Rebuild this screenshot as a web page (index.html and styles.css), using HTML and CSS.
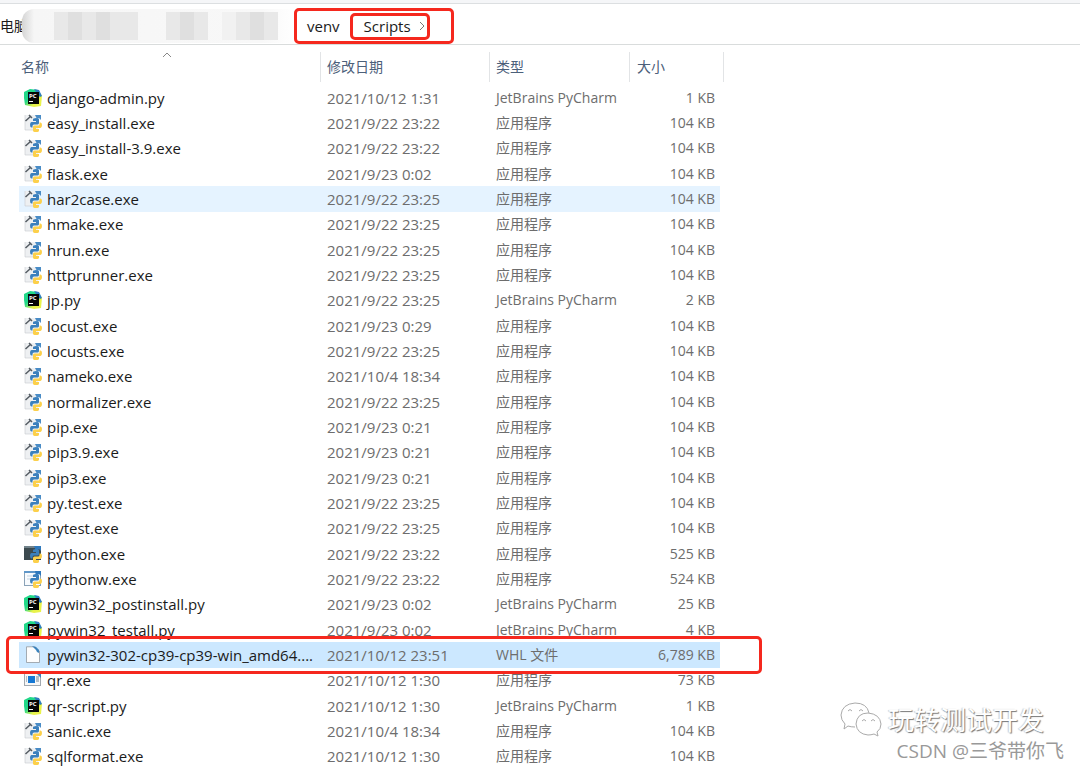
FILE: index.html
```
<!DOCTYPE html>
<html lang="zh-CN">
<head>
  <meta charset="utf-8">
  <title>Scripts</title>
  <link rel="stylesheet" href="styles.css">
</head>
<body>
  <svg class="sprite" aria-hidden="true">
    <defs>
      <linearGradient id="jb" x1="0" y1="0" x2="1" y2="1">
        <stop offset="0.4" stop-color="#21d789"/>
        <stop offset="0.7" stop-color="#e9f24a"/>
      </linearGradient>
    </defs>
    <symbol id="snake" viewBox="0 0 12 14">
      <path fill="#3b80bd" d="M3 1.5Q3 0 6 0T9 1.5V5Q9 6.500 7.500 6.500H4Q2.500 6.500 2.500 8V9.500H1.500Q0 9.500 0 6.800T1.500 4H6V3H3Z"/>
      <path fill="#fcd04b" d="M9.500 4.500H10.500Q12 4.500 12 7T10.500 10H6V11H9V12.500Q9 14 6 14T3 12.500V9Q3 7.500 4.500 7.500H8Q9.500 7.500 9.500 6Z"/>
    </symbol>
    <symbol id="exe" viewBox="0 0 18 18">
      <path fill="#eef0f2" d="M1 1H14V16H1Z"/>
      <path fill="none" stroke="#c6cacf" stroke-width=".6" d="M1 1V16H12"/>
      <path fill="none" stroke="#555c63" stroke-width="1.500" d="M1.500 7L7 2M5 1L8 4"/>
      <path fill="#4a8cc6" d="M11 1L17 1V6L15 4L13 5Z"/>
      <use href="#snake" x="6" y="4" width="12" height="14"/>
    </symbol>
    <symbol id="py" viewBox="0 0 18 18">
      <path fill="url(#jb)" d="M0 3L6 0L14 1L18 7L17 17L10 18L1 16L0 9Z"/>
      <path fill="#2e7dc0" d="M10 0L15 1L18 7L16 8L12 3Z"/>
      <rect x="4" y="3" width="11" height="12" fill="#060606"/>
      <text x="5" y="9" class="pc">PC</text>
      <rect x="5" y="12" width="4" height="1" fill="#fff"/>
    </symbol>
    <symbol id="console" viewBox="0 0 18 18">
      <rect x="0" y="1" width="17" height="14" fill="#3c4a4f"/>
      <rect x="0" y="1" width="17" height="2" fill="#71828a"/>
      <path fill="#2f79bd" d="M10 1H17V6L15 4L12 6Z"/>
      <use href="#snake" x="6" y="4" width="12" height="14"/>
    </symbol>
    <symbol id="window" viewBox="0 0 18 18">
      <rect x=".5" y="1.500" width="16" height="14" fill="#f8fbfe" stroke="#8ba3b8"/>
      <path stroke="#5f97c9" stroke-width="2" d="M0 2H17"/>
      <path stroke="#c1d3e2" d="M3 6H9M3 9H7"/>
      <path fill="#2f79bd" d="M11 1H17V6L15 4L12 6Z"/>
      <use href="#snake" x="6" y="4" width="12" height="14"/>
    </symbol>
    <symbol id="file" viewBox="0 0 18 18">
      <path fill="#fdfdfd" stroke="#92989e" stroke-width=".8" d="M2.500 .8H11L15.500 5V16.500H2.500Z"/>
      <path fill="#3b83bd" d="M8 0L12 1L15 4V7L13 6L12 4Z"/>
    </symbol>
    <symbol id="app" viewBox="0 0 18 18">
      <rect x=".5" y="2.500" width="16" height="12" fill="#f7f7f7" stroke="#a2a9b0"/>
      <rect x="4" y="5" width="7" height="7" fill="#1577d3"/>
      <path stroke="#718596" d="M2 6H3M2 8H3M2 10H3M12 6H15M12 8H15M12 10H15"/>
      <path fill="#3b83bd" d="M11 1H17V7L14 4Z"/>
    </symbol>
  </svg>

  <nav class="address-bar">
    <a href="#" class="root">电脑</a>
    <div class="mosaic">
      <div class="blocks wide"><i></i><i class="dark"></i><i></i><i class="dark"></i><i></i><i></i></div>
      <div class="blocks"><i></i><i class="dark"></i><i></i></div>
      <div class="blocks"><i class="light"></i><i></i><i class="dark"></i><i></i></div>
    </div>
    <div class="mark path-mark">
      <a href="#">venv</a>
      <div class="mark folder-mark">
        <a href="#">Scripts</a>
        <svg class="chevron" viewBox="0 0 6 10"><path d="M1 1L5 5L1 9"/></svg>
      </div>
    </div>
  </nav>

  <table class="files">
    <thead>
      <tr>
        <th class="name"><button>名称</button><svg class="sort" viewBox="0 0 10 6"><path d="M1 5L5 1L9 5"/></svg></th>
        <th class="date"><button>修改日期</button></th>
        <th class="type"><button>类型</button></th>
        <th class="size"><button>大小</button></th>
      </tr>
    </thead>
    <tbody>
      <tr><td><svg class="icon"><use href="#py"/></svg>django-admin.py</td><td>2021/10/12 1:31</td><td class="type">JetBrains PyCharm</td><td class="size">1 KB</td></tr>
      <tr><td><svg class="icon"><use href="#exe"/></svg>easy_install.exe</td><td>2021/9/22 23:22</td><td class="type">应用程序</td><td class="size">104 KB</td></tr>
      <tr><td><svg class="icon"><use href="#exe"/></svg>easy_install-3.9.exe</td><td>2021/9/22 23:22</td><td class="type">应用程序</td><td class="size">104 KB</td></tr>
      <tr><td><svg class="icon"><use href="#exe"/></svg>flask.exe</td><td>2021/9/23 0:02</td><td class="type">应用程序</td><td class="size">104 KB</td></tr>
      <tr class="hover"><td><svg class="icon"><use href="#exe"/></svg>har2case.exe</td><td>2021/9/22 23:25</td><td class="type">应用程序</td><td class="size">104 KB</td></tr>
      <tr><td><svg class="icon"><use href="#exe"/></svg>hmake.exe</td><td>2021/9/22 23:25</td><td class="type">应用程序</td><td class="size">104 KB</td></tr>
      <tr><td><svg class="icon"><use href="#exe"/></svg>hrun.exe</td><td>2021/9/22 23:25</td><td class="type">应用程序</td><td class="size">104 KB</td></tr>
      <tr><td><svg class="icon"><use href="#exe"/></svg>httprunner.exe</td><td>2021/9/22 23:25</td><td class="type">应用程序</td><td class="size">104 KB</td></tr>
      <tr><td><svg class="icon"><use href="#py"/></svg>jp.py</td><td>2021/9/22 23:25</td><td class="type">JetBrains PyCharm</td><td class="size">2 KB</td></tr>
      <tr><td><svg class="icon"><use href="#exe"/></svg>locust.exe</td><td>2021/9/23 0:29</td><td class="type">应用程序</td><td class="size">104 KB</td></tr>
      <tr><td><svg class="icon"><use href="#exe"/></svg>locusts.exe</td><td>2021/9/22 23:25</td><td class="type">应用程序</td><td class="size">104 KB</td></tr>
      <tr><td><svg class="icon"><use href="#exe"/></svg>nameko.exe</td><td>2021/10/4 18:34</td><td class="type">应用程序</td><td class="size">104 KB</td></tr>
      <tr><td><svg class="icon"><use href="#exe"/></svg>normalizer.exe</td><td>2021/9/22 23:25</td><td class="type">应用程序</td><td class="size">104 KB</td></tr>
      <tr><td><svg class="icon"><use href="#exe"/></svg>pip.exe</td><td>2021/9/23 0:21</td><td class="type">应用程序</td><td class="size">104 KB</td></tr>
      <tr><td><svg class="icon"><use href="#exe"/></svg>pip3.9.exe</td><td>2021/9/23 0:21</td><td class="type">应用程序</td><td class="size">104 KB</td></tr>
      <tr><td><svg class="icon"><use href="#exe"/></svg>pip3.exe</td><td>2021/9/23 0:21</td><td class="type">应用程序</td><td class="size">104 KB</td></tr>
      <tr><td><svg class="icon"><use href="#exe"/></svg>py.test.exe</td><td>2021/9/22 23:25</td><td class="type">应用程序</td><td class="size">104 KB</td></tr>
      <tr><td><svg class="icon"><use href="#exe"/></svg>pytest.exe</td><td>2021/9/22 23:25</td><td class="type">应用程序</td><td class="size">104 KB</td></tr>
      <tr><td><svg class="icon"><use href="#console"/></svg>python.exe</td><td>2021/9/22 23:22</td><td class="type">应用程序</td><td class="size">525 KB</td></tr>
      <tr><td><svg class="icon"><use href="#window"/></svg>pythonw.exe</td><td>2021/9/22 23:22</td><td class="type">应用程序</td><td class="size">524 KB</td></tr>
      <tr><td><svg class="icon"><use href="#py"/></svg>pywin32_postinstall.py</td><td>2021/9/23 0:02</td><td class="type">JetBrains PyCharm</td><td class="size">25 KB</td></tr>
      <tr><td><svg class="icon"><use href="#py"/></svg>pywin32_testall.py</td><td>2021/9/23 0:02</td><td class="type">JetBrains PyCharm</td><td class="size">4 KB</td></tr>
      <tr class="selected"><td><svg class="icon"><use href="#file"/></svg>pywin32-302-cp39-cp39-win_amd64....</td><td>2021/10/12 23:51</td><td class="type">WHL 文件</td><td class="size">6,789 KB<span class="mark row-mark"></span></td></tr>
      <tr><td><svg class="icon"><use href="#app"/></svg>qr.exe</td><td>2021/10/12 1:30</td><td class="type">应用程序</td><td class="size">73 KB</td></tr>
      <tr><td><svg class="icon"><use href="#py"/></svg>qr-script.py</td><td>2021/10/12 1:30</td><td class="type">JetBrains PyCharm</td><td class="size">1 KB</td></tr>
      <tr><td><svg class="icon"><use href="#exe"/></svg>sanic.exe</td><td>2021/10/4 18:34</td><td class="type">应用程序</td><td class="size">104 KB</td></tr>
      <tr><td><svg class="icon"><use href="#exe"/></svg>sqlformat.exe</td><td>2021/10/12 1:30</td><td class="type">应用程序</td><td class="size">104 KB</td></tr>
    </tbody>
  </table>

  <div class="watermark">
    <div class="account">
      <svg class="wechat" viewBox="0 0 42 38">
        <path d="M15 26Q11 26 8 25L4 28L5 23Q1 19 1 14Q2 3 15 2Q27 2 29 12"/>
        <path d="M16 23Q17 12 28 12Q40 13 41 23Q41 28 37 31L38 35L34 33Q31 34 28 34Q17 33 16 23Z"/>
        <path d="M8 10Q10 7 12 10M19 10Q21 7 23 10M22 20Q24 17 26 20M31 20Q33 17 35 20"/>
      </svg>
      <span>玩转测试开发</span>
    </div>
    <div class="author">CSDN @三爷带你飞</div>
  </div>
</body>
</html>
```

FILE: styles.css
```
* {
  box-sizing: border-box;
}

body {
  margin: 0;
  height: 100vh;
  position: relative;
  overflow: hidden;
  background-color: #fff;
  border-top: 3px solid #f5f6f8;
  font-family: "Open Sans", "Noto Sans CJK SC", sans-serif;
  font-size: 14px;
  line-height: 20px;
  color: #1b1b1b;
}

a {
  color: inherit;
  text-decoration: none;
}

.sprite {
  position: absolute;
  width: 0;
  height: 0;
}

.pc {
  font-family: "Open Sans", sans-serif;
  font-size: 6px;
  font-weight: bold;
  fill: #fff;
}

/* address bar */
.address-bar {
  display: flex;
  align-items: center;
  height: 42px;
  padding-top: 4px;
  border-top: 1px solid #dcdfe1;
  border-bottom: 1px solid #d9dcdc;
}

.root {
  width: 22px;
  white-space: nowrap;
}

/* sits over the end of the root label */
.mosaic {
  position: relative;
  display: flex;
  align-items: center;
  gap: 14px;
  width: 272px;
  height: 34px;
  padding-left: 32px;
  background: linear-gradient(90deg, #d5d5d5, #f6f6f6 12px, #f8f8f8 240px, #fff);
  border-radius: 12px 0 0 12px;
}

.blocks {
  display: flex;
  height: 28px;
}

.blocks.wide {
  margin-right: 14px;
}

.blocks i {
  width: 14px;
  background-color: #e8e8e8;
}

.blocks i.dark {
  background-color: #dfdfdf;
}

.blocks i.light {
  background-color: #f1f1f1;
}

.mark {
  border: 3px solid #f5281e;
  border-radius: 5px;
}

.path-mark {
  display: flex;
  align-items: center;
  gap: 10px;
  width: 160px;
  height: 36px;
  padding-left: 10px;
  font-size: 15px;
}

.folder-mark {
  display: flex;
  align-items: center;
  gap: 8px;
  height: 27px;
  padding: 0 2px 0 11px;
}

.chevron {
  width: 6px;
  height: 10px;
  fill: none;
  stroke: #777;
}

/* file list */
.files {
  table-layout: fixed;
  width: 701px;
  height: calc(100vh - 45px);
  margin-left: 19px;
  border-collapse: collapse;
}

th,
td {
  padding: 0 0 0 6px;
  text-align: left;
  font-weight: normal;
  white-space: nowrap;
}

th {
  position: relative;
  height: 40px;
  padding-top: 4px;
}

th::after {
  content: "";
  position: absolute;
  right: 0;
  top: 7px;
  bottom: 3px;
  border-right: 1px solid #e2e4e6;
}

th.size::after {
  right: -4px;
}

th button {
  padding: 0;
  border: 0;
  background: none;
  font: inherit;
  color: #4c607a;
}

th.name {
  width: 302px;
}

th.date {
  width: 169px;
}

th.type {
  width: 140px;
}

th.size {
  padding-left: 7px;
}

.sort {
  position: absolute;
  left: 143px;
  top: 7px;
  width: 10px;
  height: 6px;
  fill: none;
  stroke: #888;
}

td {
  font-size: 15px;
  color: #6d6d6d;
}

th:first-child {
  padding-left: 2px;
}

td:first-child {
  padding-left: 5px;
  color: #1b1b1b;
}

td.type,
td.size {
  font-size: 14px;
}

td.size {
  padding-right: 5px;
  text-align: right;
}

.icon {
  width: 18px;
  height: 18px;
  margin-right: 5px;
  vertical-align: -3px;
}

.hover {
  background-color: #e5f3ff;
}

.selected {
  position: relative;
  background-color: #cce8ff;
}

.row-mark {
  position: absolute;
  left: -13px;
  right: -42px;
  top: -6px;
  bottom: -6px;
}

/* watermark */
.watermark {
  position: absolute;
  right: 16px;
  bottom: 6px;
  text-align: right;
  color: #fff;
  text-shadow: 1px 1px 1px #777, -1px 0 1px #ccc;
}

.account {
  display: flex;
  align-items: center;
  gap: 6px;
  margin-right: 20px;
  font-size: 26px;
  line-height: 36px;
}

.wechat {
  width: 42px;
  height: 38px;
  fill: #fff;
  stroke: #aaa;
}

.author {
  font-size: 19px;
  line-height: 24px;
  color: #999;
  text-shadow: 1px 1px 0 #fff;
}
```
